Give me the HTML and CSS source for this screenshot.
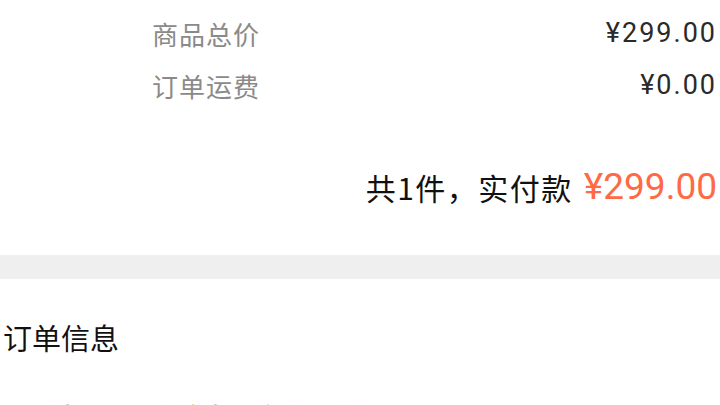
FILE: index.html
```html
<!DOCTYPE html>
<html lang="zh-CN">
<head>
<meta charset="utf-8">
<title>订单详情</title>
<link rel="stylesheet" href="styles.css">
</head>
<body>
<div class="page">
  <section class="price-card">
    <div class="price-row">
      <span class="label">商品总价</span>
      <span class="value">¥299.00</span>
    </div>
    <div class="price-row">
      <span class="label">订单运费</span>
      <span class="value">¥0.00</span>
    </div>
    <div class="total-row">
      <span class="total-text">共1件，实付款</span>
      <span class="total-price">¥299.00</span>
    </div>
  </section>
  <div class="divider"></div>
  <section class="info-card">
    <h2 class="info-title">订单信息</h2>
    <div class="info-row">
      <span class="info-label">联系客服</span>
      <span class="info-value"><span class="accent">在线</span>客服咨询订单</span>
    </div>
  </section>
</div>
</body>
</html>
```

FILE: styles.css
```css
html, body {
  margin: 0;
  padding: 0;
  background: #ffffff;
}
body {
  font-family: "Noto Sans CJK SC", "Noto Sans", sans-serif;
  width: 720px;
  height: 405px;
  overflow: hidden;
}
.page {
  display: flex;
  flex-direction: column;
}
.price-card {
  display: flex;
  flex-direction: column;
  padding: 7px 3px 42px 152px;
}
.price-row {
  display: flex;
  justify-content: space-between;
  align-items: center;
  height: 52px;
}
.label {
  font-size: 26px;
  color: #8a8a8a;
  letter-spacing: 1px;
}
.value {
  font-family: "Roboto", "Noto Sans", sans-serif;
  font-size: 27px;
  color: #2a2a2a;
  letter-spacing: 2px;
}
.total-row {
  display: flex;
  justify-content: flex-end;
  align-items: center;
  gap: 11px;
  height: 53px;
  margin-top: 49px;
}
.total-text {
  font-size: 30px;
  font-weight: 400;
  color: #111111;
  letter-spacing: 1.5px;
}
.total-price {
  font-family: "Roboto", "Noto Sans", sans-serif;
  font-size: 37px;
  color: #ff6a45;
}
.divider {
  height: 24px;
  background: #efefef;
}
.info-card {
  display: flex;
  flex-direction: column;
  padding: 28px 5px 0 3px;
}
.info-title {
  margin: 0;
  height: 59px;
  display: flex;
  align-items: center;
  font-size: 29px;
  font-weight: 400;
  color: #111111;
}
.info-row {
  display: flex;
  align-items: center;
  gap: 44px;
  height: 52px;
  margin-top: 23px;
}
.info-label {
  font-size: 26px;
  color: #8a8a8a;
}
.info-value {
  font-size: 26px;
  color: #8c95a5;
}
.accent {
  color: #f5a623;
}
```
